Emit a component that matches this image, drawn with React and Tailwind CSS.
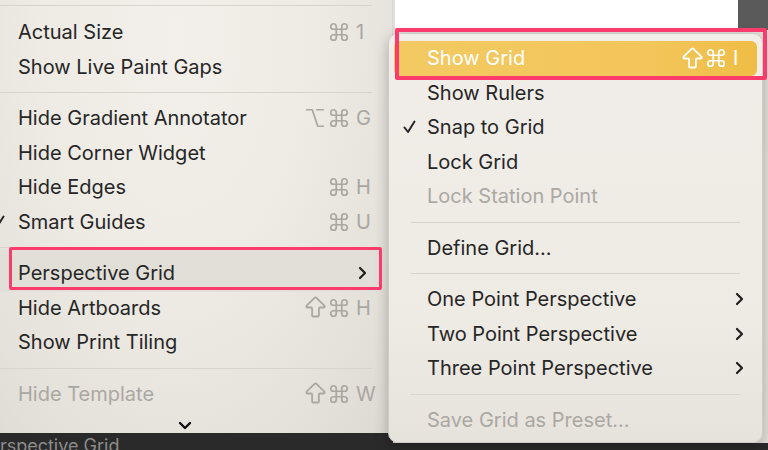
import React from "react";
import { Command, Option, ArrowBigUp } from "lucide-react";

const Check = ({ className }) => (
  <svg className={className} width="13" height="14" viewBox="0 0 13 14" fill="none">
    <path d="M1.5 7.5 L5 12 L11.5 1.5" stroke="#262626" strokeWidth="2" strokeLinecap="round" strokeLinejoin="round" />
  </svg>
);

const ChevronRight = () => (
  <svg width="9" height="14" viewBox="0 0 9 14" fill="none">
    <path d="M2 2 L7 7 L2 12" stroke="#1f1f1f" strokeWidth="2.2" strokeLinecap="round" strokeLinejoin="round" />
  </svg>
);

const ModIcon = ({ m }) => {
  if (m === "cmd") return <Command size={22} strokeWidth={1.9} className="-mx-[2px]" />;
  if (m === "opt") return <Option size={22} strokeWidth={1.9} className="-mx-[2px]" />;
  return <ArrowBigUp size={27} strokeWidth={1.6} className="-mx-[5px]" />;
};

const Shortcut = ({ mods, k, light }) => (
  <span className={`flex items-center ${light ? "text-white" : "text-[#aaa7a2]"}`}>
    <span className="flex items-center gap-[6px]">
      {mods.map((m, i) => (
        <ModIcon key={i} m={m} />
      ))}
    </span>
    <span className="w-[14px] ml-[8px] text-left">{k}</span>
  </span>
);

const Sep = ({ mx }) => (
  <div className="h-[17px] flex items-center">
    <div className={`h-px flex-1 bg-[#d7d3cd] ${mx}`} />
  </div>
);

function Row({ label, mods, k, check, sub, disabled, checkLeft, padL, padR }) {
  return (
    <div className={`relative h-[34.5px] flex items-center ${padL} ${padR}`}>
      {check && (
        <span className={`absolute ${checkLeft} top-1/2 -translate-y-1/2`}>
          <Check />
        </span>
      )}
      <span className={`flex-1 ${disabled ? "text-[#aba8a3]" : "text-[#262626]"}`}>{label}</span>
      {mods !== undefined && <Shortcut mods={mods} k={k} />}
      {sub && (
        <span className="mr-[-2px]">
          <ChevronRight />
        </span>
      )}
    </div>
  );
}

export default function App() {
  const lp = "pl-[18px]";
  const lr = "pr-[22px]";
  const rp = "pl-[38px]";
  const rr = "pr-[15px]";
  return (
    <div className="relative w-[768px] h-[450px] overflow-hidden bg-[#2a2a2a] font-['Inter',sans-serif] text-[20px] leading-none">
      <div className="flex h-full">
        {/* Left menu column */}
        <div className="w-[393px] flex flex-col">
          <div className="h-[433px] bg-[radial-gradient(ellipse_at_45%_8%,#f3f0eb_0%,#eeeae4_45%,#e4e0da_80%,#dcd8d2_100%)] border-r border-[#d9d5cf]">
            <div className="h-[15px] pt-[5px]">
              <div className="h-px bg-[#d7d3cd] mr-[20px]" />
            </div>
            <Row label="Actual Size" mods={["cmd"]} k="1" padL={lp} padR={lr} />
            <Row label="Show Live Paint Gaps" padL={lp} padR={lr} />
            <Sep mx="mr-[20px]" />
            <Row label="Hide Gradient Annotator" mods={["opt", "cmd"]} k="G" padL={lp} padR={lr} />
            <Row label="Hide Corner Widget" padL={lp} padR={lr} />
            <Row label="Hide Edges" mods={["cmd"]} k="H" padL={lp} padR={lr} />
            <Row label="Smart Guides" mods={["cmd"]} k="U" check checkLeft="left-[-8px]" padL={lp} padR={lr} />
            <Sep mx="mr-[20px]" />
            <div className="relative h-[34.5px]">
              <div className="absolute left-0 right-[8px] top-[-6px] bottom-[-1px] bg-[#e2ded8]" />
              <div className={`relative h-full flex items-center ${lp} pr-[25px]`}>
                <span className="flex-1 text-[#262626]">Perspective Grid</span>
                <ChevronRight />
              </div>
            </div>
            <Row label="Hide Artboards" mods={["shift", "cmd"]} k="H" padL={lp} padR={lr} />
            <Row label="Show Print Tiling" padL={lp} padR={lr} />
            <Sep mx="mr-[20px]" />
            <Row label="Hide Template" mods={["shift", "cmd"]} k="W" disabled padL={lp} padR={lr} />
            <div className="flex justify-center pr-[22px] pt-[10px]">
              <svg width="14" height="9" viewBox="0 0 14 9" fill="none">
                <path d="M2 2 L7 7 L12 2" stroke="#111" strokeWidth="2.4" strokeLinecap="round" strokeLinejoin="round" />
              </svg>
            </div>
          </div>
          <div className="flex-1 overflow-hidden">
            <div className="mt-[4px] ml-[-22px] text-[18px] text-[#8c8c8c] whitespace-nowrap">Perspective Grid</div>
          </div>
        </div>
        {/* Right background column */}
        <div className="flex-1 flex flex-col">
          <div className="h-[30px] flex">
            <div className="flex-1 bg-white border-l-2 border-[#e3e0db]" />
            <div className="w-[30px] bg-[#5a5a5a]" />
          </div>
          <div className="flex-1 bg-[#e4e0da]" />
          <div className="h-[7px] bg-[#2a2a2a]" />
        </div>
      </div>

      {/* Submenu */}
      <div className="absolute left-[388px] top-[33px] w-[375px] h-[410px] rounded-[10px] border border-[#cfcbc5] bg-[linear-gradient(to_bottom,#f1ede8,#eeeae4_70%,#e6e2dc)] shadow-[0_4px_14px_rgba(0,0,0,0.25)] pt-[7px]">
        <div className="relative h-[34.5px] mx-[5px]">
          <div className="absolute inset-0 rounded-[6px] bg-[linear-gradient(to_right,#f3c962,#f2c65a_70%,#efbd45)]" />
          <div className="relative h-full flex items-center pl-[33px] pr-[10px]">
            <span className="flex-1 text-white">Show Grid</span>
            <Shortcut mods={["shift", "cmd"]} k="I" light />
          </div>
        </div>
        <Row label="Show Rulers" padL={rp} padR={rr} />
        <Row label="Snap to Grid" check checkLeft="left-[14px]" padL={rp} padR={rr} />
        <Row label="Lock Grid" padL={rp} padR={rr} />
        <Row label="Lock Station Point" disabled padL={rp} padR={rr} />
        <Sep mx="mx-[22px]" />
        <Row label="Define Grid..." padL={rp} padR={rr} />
        <Sep mx="mx-[22px]" />
        <Row label="One Point Perspective" sub padL={rp} padR="pr-[20px]" />
        <Row label="Two Point Perspective" sub padL={rp} padR="pr-[20px]" />
        <Row label="Three Point Perspective" sub padL={rp} padR="pr-[20px]" />
        <Sep mx="mx-[22px]" />
        <Row label="Save Grid as Preset..." disabled padL={rp} padR={rr} />
      </div>

      {/* Pink annotation boxes */}
      <div className="absolute left-[9px] top-[247px] w-[373px] h-[43px] border-[3px] border-[#fc3b6d] rounded-[2px]" />
      <div className="absolute left-[395px] top-[28px] w-[372px] h-[52px] border-[4px] border-[#fc3b6d] rounded-[2px]" />
    </div>
  );
}
